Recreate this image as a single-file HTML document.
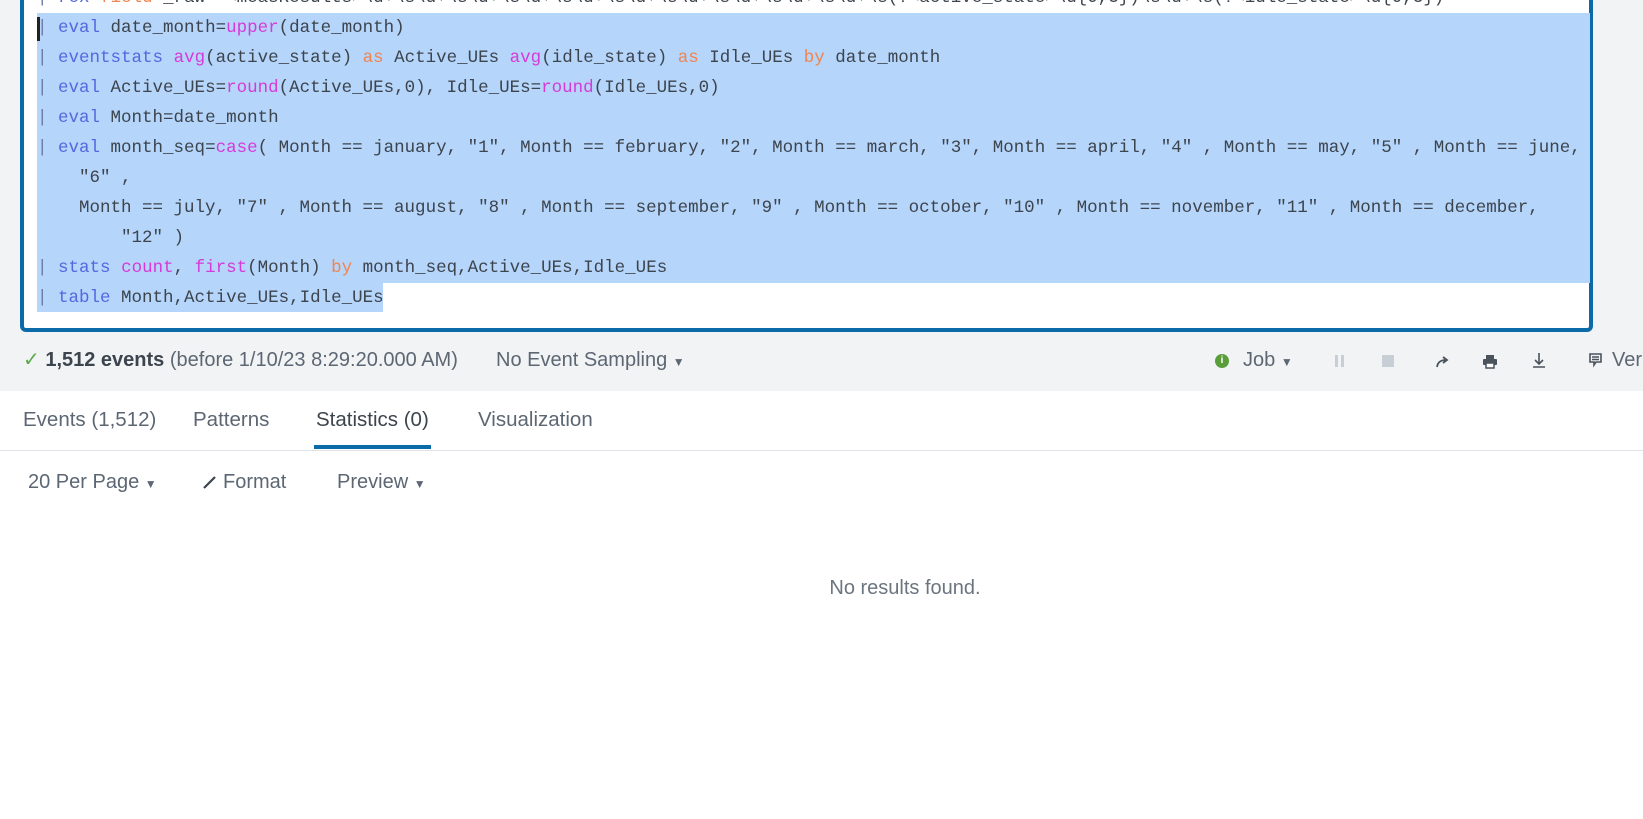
<!DOCTYPE html>
<html><head><meta charset="utf-8"><style>
*{margin:0;padding:0;box-sizing:border-box}
body{width:1643px;height:819px;overflow:hidden;background:#fff;font-family:"Liberation Sans",sans-serif;position:relative}
.gray{position:absolute;left:0;top:0;width:1643px;height:391px;background:#f2f3f5}
.editor{position:absolute;left:20px;top:-10px;width:1573px;height:342px;background:#fff;border:4px solid #0b6aa8;border-top:none;border-radius:0 0 6px 6px}
.code{position:absolute;left:37px;font-family:"Liberation Mono",monospace;font-size:17.5px;color:#3c444d;white-space:pre;line-height:30px;height:30px}
.sel{position:absolute;background:#b5d5fb}
.k{color:#5468e0}.f{color:#d63ad8}.o{color:#ef8550}.p{color:#6c7ba6}
.t{position:absolute;font-size:20px;color:#3c444d;white-space:nowrap;line-height:24px}
.g{color:#5c6773}
</style></head><body>
<div class="gray"></div>
<div class="editor"></div>
<div class="sel" style="left:37px;top:13px;width:1553px;height:270px"></div>
<div class="sel" style="left:37px;top:283px;width:346px;height:29px"></div>
<div style="position:absolute;left:37px;top:17px;width:3px;height:24px;background:#222"></div>
<div class="code" style="top:-17px"><span class="p">|</span> <span class="k">rex</span> <span class="o">field</span>=_raw "&lt;measResults&gt;\d+\s\d+\s\d+\s\d+\s\d+\s\d+\s\d+\s\d+\s\d+\s\d+\s(?&lt;active_state&gt;\d{0,3})\s\d+\s(?&lt;idle_state&gt;\d{0,3})"</div>
<div class="code" style="top:13px"><span class="p">|</span> <span class="k">eval</span> date_month=<span class="f">upper</span>(date_month)</div>
<div class="code" style="top:43px"><span class="p">|</span> <span class="k">eventstats</span> <span class="f">avg</span>(active_state) <span class="o">as</span> Active_UEs <span class="f">avg</span>(idle_state) <span class="o">as</span> Idle_UEs <span class="o">by</span> date_month</div>
<div class="code" style="top:73px"><span class="p">|</span> <span class="k">eval</span> Active_UEs=<span class="f">round</span>(Active_UEs,0), Idle_UEs=<span class="f">round</span>(Idle_UEs,0)</div>
<div class="code" style="top:103px"><span class="p">|</span> <span class="k">eval</span> Month=date_month</div>
<div class="code" style="top:133px"><span class="p">|</span> <span class="k">eval</span> month_seq=<span class="f">case</span>( Month == january, "1", Month == february, "2", Month == march, "3", Month == april, "4" , Month == may, "5" , Month == june,</div>
<div class="code" style="top:163px">    "6" ,</div>
<div class="code" style="top:193px">    Month == july, "7" , Month == august, "8" , Month == september, "9" , Month == october, "10" , Month == november, "11" , Month == december,</div>
<div class="code" style="top:223px">        "12" )</div>
<div class="code" style="top:253px"><span class="p">|</span> <span class="k">stats</span> <span class="f">count</span>, <span class="f">first</span>(Month) <span class="o">by</span> month_seq,Active_UEs,Idle_UEs</div>
<div class="code" style="top:283px"><span class="p">|</span> <span class="k">table</span> Month,Active_UEs,Idle_UEs</div>

<div class="t" style="left:23px;top:348px"><span style="color:#5cab4a">✓</span> <b>1,512 events</b> <span class="g">(before 1/10/23 8:29:20.000 AM)</span></div>
<div class="t g" style="left:496px;top:348px">No Event Sampling <span style="font-size:12px">▼</span></div>
<div style="position:absolute;left:1215px;top:354px;width:14px;height:14px;border-radius:50%;background:#5a9e3c;color:#fff;font-size:10px;font-weight:bold;text-align:center;line-height:14px">i</div>
<div class="t g" style="left:1243px;top:348px">Job <span style="font-size:12px">▼</span></div>
<div style="position:absolute;left:1335px;top:355px;width:3px;height:12px;background:#c8ced6"></div>
<div style="position:absolute;left:1341px;top:355px;width:3px;height:12px;background:#c8ced6"></div>
<div style="position:absolute;left:1382px;top:355px;width:12px;height:12px;background:#c8ced6"></div>
<svg style="position:absolute;left:1434px;top:353px" width="16" height="16"><path d="M3 14 Q4 7 12 7 M9 4 L13 7 L9 10" stroke="#4a525c" stroke-width="1.8" fill="none"/></svg>
<svg style="position:absolute;left:1482px;top:353px" width="16" height="16"><rect x="4" y="2" width="8" height="4" fill="#4a525c"/><rect x="1" y="6" width="14" height="6" rx="1" fill="#4a525c"/><rect x="4" y="10" width="8" height="5" fill="#fff" stroke="#4a525c" stroke-width="1.5"/></svg>
<svg style="position:absolute;left:1531px;top:352px" width="16" height="17"><path d="M8 1 V12 M4 8 L8 12 L12 8 M2 15 H14" stroke="#4a525c" stroke-width="1.6" fill="none"/></svg>
<svg style="position:absolute;left:1588px;top:352px" width="16" height="16"><path d="M2 2 H13 V10 H8 L6 13 V10 H2 Z M4 5 H11 M4 7.5 H11" stroke="#4a525c" stroke-width="1.6" fill="none"/></svg>
<div class="t g" style="left:1612px;top:348px">Ver</div>

<div class="t g" style="left:23px;top:408px;font-size:20.5px">Events (1,512)</div>
<div class="t g" style="left:193px;top:408px;font-size:20.5px">Patterns</div>
<div class="t" style="left:316px;top:408px;font-size:20.5px;color:#3c444d">Statistics (0)</div>
<div class="t g" style="left:478px;top:408px;font-size:20.5px">Visualization</div>
<div style="position:absolute;left:0;top:450px;width:1643px;height:1px;background:#dfe3e8"></div>
<div style="position:absolute;left:314px;top:445px;width:117px;height:4px;background:#0b6aa8"></div>

<div class="t g" style="left:28px;top:470px">20 Per Page <span style="font-size:12px">▼</span></div>
<svg style="position:absolute;left:202px;top:474px" width="16" height="16"><path d="M2 14 L13 3" stroke="#3c444d" stroke-width="2.2"/></svg>
<div class="t g" style="left:223px;top:470px">Format</div>
<div class="t g" style="left:337px;top:470px">Preview <span style="font-size:12px">▼</span></div>
<div class="t" style="left:0;width:1810px;text-align:center;top:576px;color:#6b7580">No results found.</div>
</body></html>
